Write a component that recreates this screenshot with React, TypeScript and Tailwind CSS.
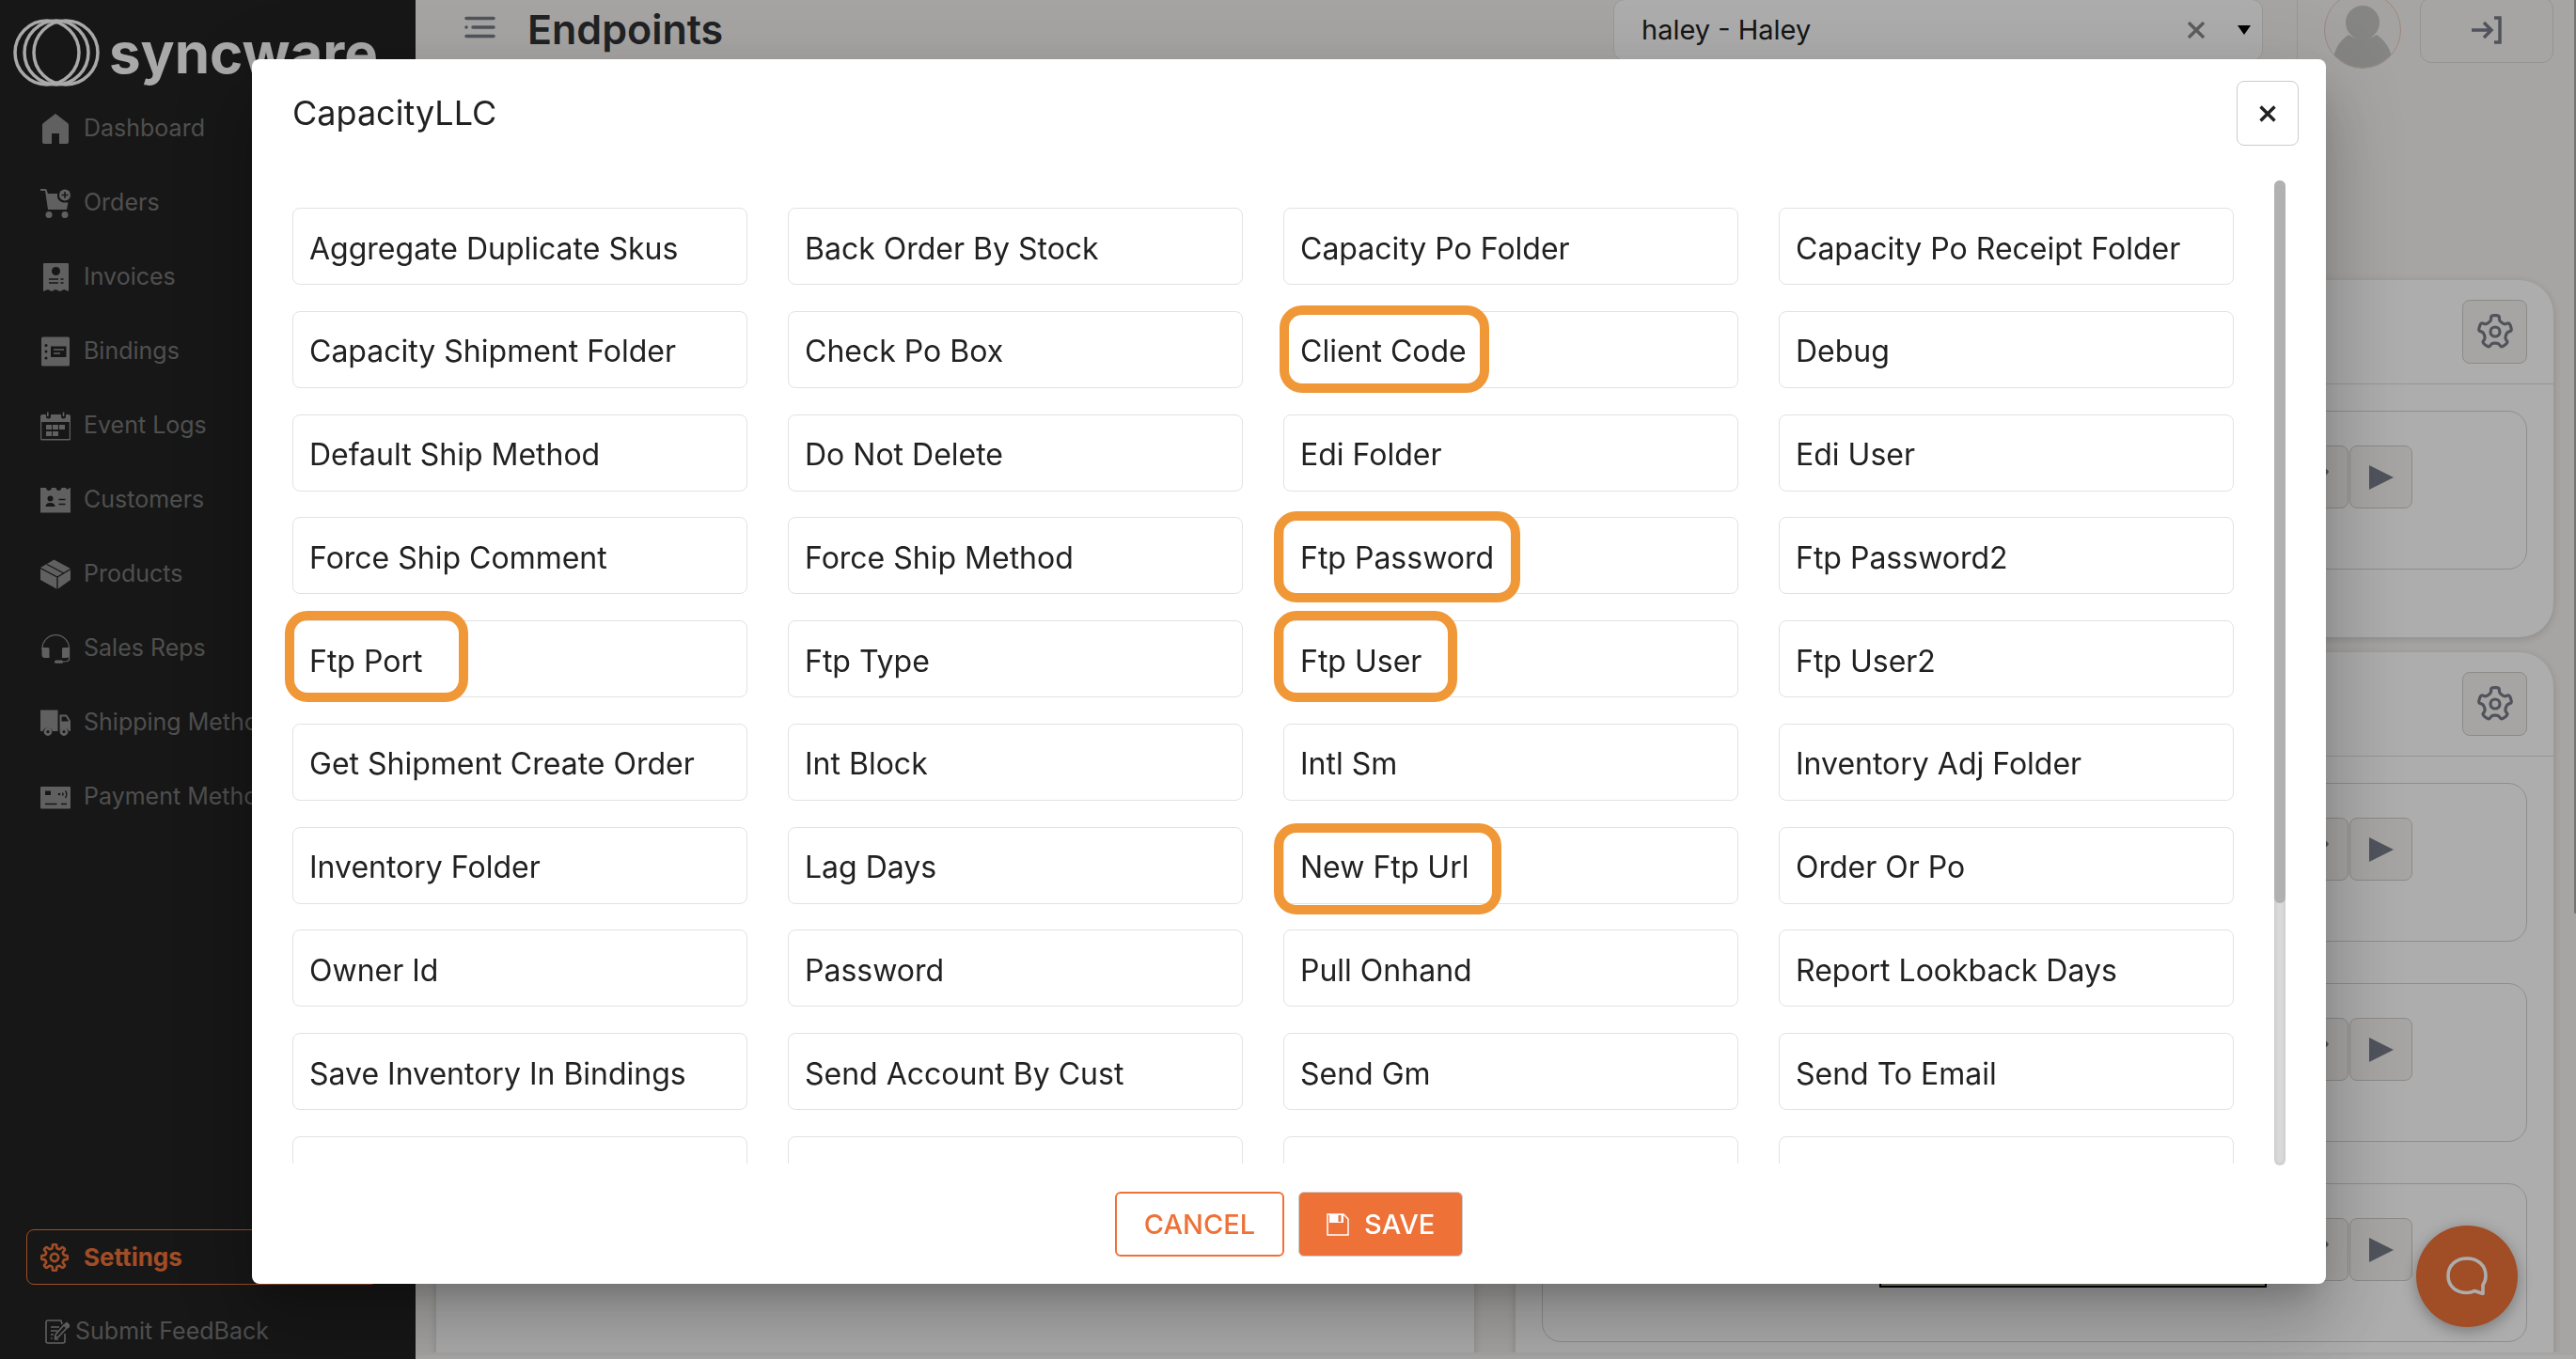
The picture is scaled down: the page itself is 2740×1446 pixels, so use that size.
import type { ReactNode } from "react";

/* Closed outline of a cog: flat rounded teeth joined by shallow valleys. */
function cogPath(teeth: number, outer: number, inner: number, tip: number, base: number) {
  const pts: [number, number][] = [];
  const step = (Math.PI * 2) / teeth;
  for (let i = 0; i < teeth; i++) {
    const mid = i * step - Math.PI / 2;
    const add = (r: number, a: number) => pts.push([20 + r * Math.cos(a), 20 + r * Math.sin(a)]);
    add(inner, mid - step * base);
    add(outer, mid - step * tip);
    add(outer, mid + step * tip);
    add(inner, mid + step * base);
  }
  const n = pts.length;
  const lerp = (a: [number, number], b: [number, number], t: number) =>
    `${(a[0] + (b[0] - a[0]) * t).toFixed(2)} ${(a[1] + (b[1] - a[1]) * t).toFixed(2)}`;
  let d = "";
  for (let i = 0; i < n; i++) {
    const prev = pts[(i + n - 1) % n];
    const cur = pts[i];
    const next = pts[(i + 1) % n];
    d += `${i === 0 ? "M" : "L"}${lerp(cur, prev, 0.38)}Q${cur[0].toFixed(2)} ${cur[1].toFixed(2)} ${lerp(cur, next, 0.38)}`;
  }
  return d + "Z";
}
const COG5 = cogPath(5, 18, 12.5, 0.2, 0.28);
const COG8 = cogPath(8, 19, 13.5, 0.19, 0.27);

function NavSvg({ children }: { children: ReactNode }) {
  return (
    <svg viewBox="0 0 32 32" className="h-8 w-8 shrink-0 fill-[#8e8e8e]" aria-hidden="true">
      {children}
    </svg>
  );
}

const nav: { label: string; icon: ReactNode }[] = [
  {
    label: "Dashboard",
    icon: <path d="M16 0 29 10q1 1 1 2v18q0 2-2 2h-8V21h-8v11H4q-2 0-2-2V12q0-1 1-2Z" />,
  },
  {
    label: "Orders",
    icon: (
      <>
        <path d="M0 1h5q2 0 2 2l1 3h10q-1 8 6 9.500h5.500L28 23H8L5 3H0Z" />
        <circle cx="26" cy="7.500" r="6" />
        <path d="M26 4v7M22.500 7.500h7" stroke="#222" strokeWidth="1.500" />
        <circle cx="9" cy="28.500" r="3.500" />
        <circle cx="26" cy="28.500" r="3.500" />
      </>
    ),
  },
  {
    label: "Invoices",
    icon: (
      <>
        <path d="M3 2q0-1 1-1h25q1 0 1 1v29l-5-2-4 2-5-2-4 2-4-2-5 2Z" />
        <circle cx="16.500" cy="9.500" r="4.500" fill="#222" />
        <path d="M9 18h10M21.500 18h3M9 22h10M21.500 22h3" stroke="#222" strokeWidth="1.400" />
      </>
    ),
  },
  {
    label: "Bindings",
    icon: (
      <>
        <rect x="1" y="0.500" width="30" height="31" rx="1.500" />
        <g fill="#222">
          <circle cx="6" cy="9.500" r="1.500" />
          <circle cx="6" cy="16" r="1.500" />
          <circle cx="6" cy="23" r="1.500" />
          <path d="M11 10.500h16.500V22H11Z" />
        </g>
        <path d="M14 14h11M14 18h7" stroke="#8e8e8e" strokeWidth="1.300" />
      </>
    ),
  },
  {
    label: "Event Logs",
    icon: (
      <>
        <path
          fillRule="evenodd"
          d="M2 4h4v2a2.500 2.500 0 0 0 5 0V4h11v2a2.500 2.500 0 0 0 5 0V4h3q2 0 2 2v24q0 1.500-1.500 1.500h-29Q0 31.500 0 30V6q0-2 2-2ZM1.200 12v18h29.600V12Z"
        />
        <path d="M7.800 1.500v4.500M24.500 1.500v4.500" stroke="#8e8e8e" strokeWidth="1.600" />
        <path d="M6 15h6v5H6ZM13 15h6v5h-6ZM20 15h6v5h-6ZM6 22h6v5H6ZM13 22h6v5h-6Z" />
      </>
    ),
  },
  {
    label: "Customers",
    icon: (
      <>
        <path d="M0 3h6q.5 3 3 3t3-3h4.500q.5 3 3 3t3-3H27q.5 2 2 1.500T31 3h1v26.500H0Z" />
        <circle cx="10.500" cy="14.500" r="3" fill="#222" />
        <path d="M5.500 23q0-4 5-4t5 4Z" fill="#222" />
        <path d="M19.500 15.500h7M19.500 20.500h7" stroke="#222" strokeWidth="1.400" />
      </>
    ),
  },
  {
    label: "Products",
    icon: (
      <>
        <path d="M14.500.500 32 10v12L18 32 0 22V9Z" />
        <path d="M0 9.500 18 19 32 10.500M18 19v13M7 5.500 25 15" stroke="#222" strokeWidth="1.400" fill="none" />
      </>
    ),
  },
  {
    label: "Sales Reps",
    icon: (
      <>
        <path d="M2 17v-1a14.300 14.300 0 0 1 28.600 0v11q0 3-5 3H22" fill="none" stroke="#8e8e8e" strokeWidth="1.200" />
        <path d="M1.500 15H8q1.500 0 1.500 1.500v9.500H5q-3.500 0-3.500-3ZM31 15h-6.500q-1.500 0-1.500 1.500v9.500h4.500q3.500 0 3.500-3Z" />
        <rect x="15" y="28.500" width="9" height="3.200" rx="1.500" />
      </>
    ),
  },
  {
    label: "Shipping Methods",
    icon: (
      <>
        <path d="M0 2.500h18.500v22.500H13a5.500 5.500 0 0 0-10.500 0H0ZM20.500 7.500H28l4 6.500v11h-1.500a5.500 5.500 0 0 0-10 0Z" />
        <path d="M22.500 9.500h4.500l3 5h-7.500Z" fill="#222" />
        <circle cx="8" cy="25.500" r="3" fill="none" stroke="#8e8e8e" strokeWidth="2.800" />
        <circle cx="25" cy="25.500" r="3" fill="none" stroke="#8e8e8e" strokeWidth="2.800" />
      </>
    ),
  },
  {
    label: "Payment Methods",
    icon: (
      <>
        <rect x="0" y="5" width="32" height="23.500" rx="1" />
        <path d="M5 9.500h6v4.500H5Z" fill="#222" />
        <path d="M5 23.500h12.500M22 23.500h6" stroke="#222" strokeWidth="1.300" />
        <circle cx="20" cy="13" r="1.300" fill="#222" />
        <path d="M23.500 11.500q1.200 1.500 0 3.200M26.500 9.500q2.600 3.500 0 7.500" stroke="#222" strokeWidth="1.400" fill="none" />
      </>
    ),
  },
];

const HL = "pointer-events-none absolute rounded-3xl border-10 border-[#f09837]";
const fields: { label: string; mark?: string }[] = [
  { label: "Aggregate Duplicate Skus" },
  { label: "Back Order By Stock" },
  { label: "Capacity Po Folder" },
  { label: "Capacity Po Receipt Folder" },
  { label: "Capacity Shipment Folder" },
  { label: "Check Po Box" },
  { label: "Client Code", mark: "-left-1 -top-1.5 h-[93px] w-[223px]" },
  { label: "Debug" },
  { label: "Default Ship Method" },
  { label: "Do Not Delete" },
  { label: "Edi Folder" },
  { label: "Edi User" },
  { label: "Force Ship Comment" },
  { label: "Force Ship Method" },
  { label: "Ftp Password", mark: "-left-2.5 -top-1.5 h-[97px] w-[262px]" },
  { label: "Ftp Password2" },
  { label: "Ftp Port", mark: "-left-2 -top-2.5 h-[97px] w-[195px]" },
  { label: "Ftp Type" },
  { label: "Ftp User", mark: "-left-2.5 -top-2.5 h-[97px] w-[195px]" },
  { label: "Ftp User2" },
  { label: "Get Shipment Create Order" },
  { label: "Int Block" },
  { label: "Intl Sm" },
  { label: "Inventory Adj Folder" },
  { label: "Inventory Folder" },
  { label: "Lag Days" },
  { label: "New Ftp Url", mark: "-left-2.5 -top-1 h-[97px] w-[242px]" },
  { label: "Order Or Po" },
  { label: "Owner Id" },
  { label: "Password" },
  { label: "Pull Onhand" },
  { label: "Report Lookback Days" },
  { label: "Save Inventory In Bindings" },
  { label: "Send Account By Cust" },
  { label: "Send Gm" },
  { label: "Send To Email" },
  { label: "Server" },
  { label: "Sftp Url" },
  { label: "Sub Method Id" },
  { label: "Sync" },
];

function Sidebar() {
  return (
    <aside className="flex w-[442px] shrink-0 flex-col overflow-hidden bg-[#222222]">
      <div className="flex h-[97px] items-center gap-2.5 pt-3.5 pl-3.5">
        <svg viewBox="0 0 92 74" className="h-[74px] w-[92px] shrink-0 fill-none stroke-[#fafafa] stroke-[3.5]" aria-hidden="true">
          <circle cx="36" cy="37" r="34" />
          <circle cx="46" cy="37" r="34" />
          <circle cx="56" cy="37" r="34" />
        </svg>
        <span className="text-[60px] leading-none font-bold text-[#fafafa]">syncware</span>
      </div>
      <nav className="flex flex-col" aria-label="Main">
        {nav.map((n) => (
          <a key={n.label} href="#" className="flex h-[79px] items-center gap-3.5 pl-[43px] text-[25px] whitespace-nowrap text-[#757575]">
            <NavSvg>{n.icon}</NavSvg>
            {n.label}
          </a>
        ))}
      </nav>
      <div className="mt-auto pr-10 pl-7">
        <a href="#" className="flex h-[59px] items-center gap-4 rounded-lg border border-[#ee7238] pl-3.5 text-[26px] font-bold text-[#ee7238]">
          <svg viewBox="0 0 40 40" className="h-[30px] w-[30px] fill-none stroke-current stroke-[3.6] [stroke-linejoin:round]" aria-hidden="true">
            <path d={COG8} />
            <circle cx="20" cy="20" r="5.500" />
          </svg>
          Settings
        </a>
        <a href="#" className="flex h-[79px] items-center gap-1.5 pt-5 pl-5 text-[25px] text-[#757575]">
          <svg viewBox="0 0 26 26" className="h-[26px] w-[26px] fill-none stroke-[#8e8e8e] stroke-[1.6]" aria-hidden="true">
            <path d="M17 1H3Q1 1 1 3v20q0 2 2 2h16q2 0 2-2v-8M17 1l1 4" />
            <path d="M10.500 19.500l1-4L20 6l3 3-9 9.500Z" />
            <path d="M21 6l2-1.500 2 2L23.500 8.500" strokeWidth="3" />
            <path d="M6 8h9M6 12h7M6 16h3M6 20h1.500M10 21h4" />
          </svg>
          Submit FeedBack
        </a>
      </div>
    </aside>
  );
}

function TopBar() {
  return (
    <header className="flex h-[63px] shrink-0 items-center pr-[22px] pl-[52px]">
      <button type="button" aria-label="Toggle menu" className="mr-[34px] mb-1.5">
        <svg viewBox="0 0 33 24" className="block h-6 w-[33px] fill-none stroke-[#767b87] stroke-[3.5] [stroke-linecap:round]" aria-hidden="true">
          <path d="M2 2.500h29M2 12h.1M9 12h22M2 21.500h29" />
        </svg>
      </button>
      <h1 className="text-[43px] leading-none font-semibold text-[#2f3236]">Endpoints</h1>
      <div className="ml-auto flex h-[66px] w-[691px] items-center rounded-xl border border-[#e2e2e2] bg-white pr-3 pl-[29px]">
        <span className="flex-1 text-[29px] leading-none text-[#212121]">haley - Haley</span>
        <button type="button" aria-label="Clear selection" className="mr-[35px]">
          <svg viewBox="0 0 18 18" className="block h-[18px] w-[18px] stroke-[#8a8a8a] stroke-[3.4]" aria-hidden="true">
            <path d="M1 1l16 16M17 1L1 17" />
          </svg>
        </button>
        <button type="button" aria-label="Open list">
          <svg viewBox="0 0 14 12" className="block h-3 w-3.5 fill-black" aria-hidden="true">
            <path d="M0 1h14L7 11Z" />
          </svg>
        </button>
      </div>
      <div className="ml-9 h-full w-px bg-[#e2ddd8]" />
      <div className="ml-7 h-[82px] w-[82px] shrink-0 overflow-hidden rounded-full border border-[#e6c8b8] bg-[#f3f1ee]">
        <svg viewBox="0 0 80 80" className="block h-full w-full fill-[#c4c4c2]" aria-hidden="true">
          <circle cx="40" cy="32" r="18" />
          <path d="M8 80q0-24 17-35 15 9 30 0 17 11 17 35Z" />
        </svg>
      </div>
      <button type="button" aria-label="Log out" className="ml-5 flex h-[70px] w-[142px] items-center justify-center rounded-xl border border-[#dcdad6]">
        <svg viewBox="0 0 34 30" className="h-[30px] w-[34px] fill-none stroke-[#767b87] stroke-[3.5]" aria-hidden="true">
          <path d="M1 15h20M14 7l8 8-8 8M25 2h6v26h-6" />
        </svg>
      </button>
    </header>
  );
}

function EndpointItem({ withInput }: { withInput?: boolean }) {
  return (
    <div className="mb-11 flex h-[169px] shrink-0 items-start justify-end rounded-[20px] border border-[#d2d2d2] pt-9 pr-[121px]">
      {withInput && (
        <input aria-label="Endpoint value" className="mr-5 h-[74px] w-[412px] border-2 border-black bg-[#cdc8aa]" />
      )}
      <button type="button" aria-label="Edit" className="flex h-[67px] w-[67px] items-center justify-center rounded-lg border border-[#cfcdc9] bg-[#f6f4f1]">
        <svg viewBox="0 0 26 26" className="h-[26px] w-[26px] fill-none stroke-[#767b87] stroke-[3.5] [stroke-linecap:round] [stroke-linejoin:round]" aria-hidden="true">
          <path d="M3 23l2-6L19 3l4 4L9 21Z" />
        </svg>
      </button>
      <button type="button" aria-label="Run" className="ml-px flex h-[67px] w-[67px] items-center justify-center rounded-lg border border-[#cfcdc9] bg-[#f6f4f1]">
        <svg viewBox="0 0 28 28" className="h-7 w-7 fill-[#767b87]" aria-hidden="true">
          <path d="M1 1l26 13L1 27Z" />
        </svg>
      </button>
    </div>
  );
}

function EndpointCard({ children }: { children: ReactNode }) {
  return (
    <section className="rounded-[36px] bg-white shadow-[0_2px_10px_rgba(0,0,0,0.16)]">
      <div className="flex h-[111px] items-center justify-end border-b border-[#dedede] px-7">
        <button type="button" aria-label="Endpoint settings" className="flex h-[68px] w-[69px] items-center justify-center rounded-lg border border-[#cfcdc9] bg-[#f6f4f1]">
          <svg viewBox="0 0 40 40" className="h-10 w-10 fill-none stroke-[#767b87] stroke-[3.2] [stroke-linejoin:round]" aria-hidden="true">
            <path d={COG5} />
            <circle cx="20" cy="20" r="5" />
          </svg>
        </button>
      </div>
      <div className="flex flex-col px-7 pt-7 pb-7">{children}</div>
    </section>
  );
}

function SettingsDialog() {
  return (
    <div className="fixed inset-0 flex bg-black/32 pt-[63px] pr-[266px] pb-20 pl-[268px]">
      <div
        role="dialog"
        aria-modal="true"
        aria-labelledby="dialog-title"
        className="flex min-w-0 flex-1 flex-col rounded-lg bg-white shadow-[0_22px_30px_-14px_rgba(0,0,0,0.2),0_48px_76px_6px_rgba(0,0,0,0.14),0_18px_92px_16px_rgba(0,0,0,0.12)]"
      >
        <div className="flex h-[129px] shrink-0 items-start justify-between pt-[23px] pr-[29px] pl-[43px]">
          <h2 id="dialog-title" className="text-4xl leading-[68px] text-[#212121]">
            CapacityLLC
          </h2>
          <button type="button" aria-label="Close" className="flex h-[69px] w-[66px] items-center justify-center rounded-lg border border-[#cccccc]">
            <svg viewBox="0 0 18 18" className="h-[18px] w-[18px] stroke-[#212121] stroke-[3.4]" aria-hidden="true">
              <path d="M1.500 1.500l15 15M16.500 1.500l-15 15" />
            </svg>
          </button>
        </div>

        <div className="flex min-h-0 flex-1 gap-[43px] px-[43px]">
          <div className="mb-0.5 -ml-4 flex-1 overflow-hidden pt-[29px] pl-4">
            <div className="grid h-[1070px] auto-rows-[82px] grid-cols-4 content-between gap-x-[43px]">
              {fields.map((f) => (
                <div key={f.label} className="relative">
                  <input
                    aria-label={f.label}
                    placeholder={f.label}
                    className="h-full w-full rounded-lg border border-[#e2e2e2] bg-white pt-1 pl-[17px] text-[32px] text-[#212121] placeholder:text-[#212121] placeholder:opacity-100"
                  />
                  {f.mark && <span className={`${HL} ${f.mark}`} />}
                </div>
              ))}
            </div>
          </div>
          <div className="w-3 shrink-0 rounded-full bg-[#dadada] shadow-[inset_0_0_5px_rgba(0,0,0,0.12)]">
            <div className="h-11/15 rounded-full bg-[#b1b1b1]" />
          </div>
        </div>

        <div className="flex shrink-0 justify-center gap-[15px] pt-7 pb-[29px]">
          <button type="button" className="h-[69px] rounded-md border-2 border-[#ee7238] px-[29px] text-[29px] font-medium text-[#ee7238]">
            CANCEL
          </button>
          <button type="button" className="flex h-[69px] items-center gap-4 rounded-md border border-[#cccccc] bg-[#ee7238] px-[29px] text-[29px] font-medium text-white">
            <svg viewBox="0 0 24 24" className="h-6 w-6 fill-none stroke-white stroke-[1.500]" aria-hidden="true">
              <path d="M1 1h17l5 5v17H1Z" />
              <path d="M3 1h15v9H3ZM12.500 2v7h3V2Z" fill="white" fillRule="evenodd" stroke="none" />
            </svg>
            SAVE
          </button>
        </div>
      </div>
    </div>
  );
}

export default function App() {
  return (
    <div className="flex h-screen overflow-hidden bg-[#f6f4f1] font-['Inter',sans-serif]">
      <Sidebar />
      <div className="flex min-w-0 flex-1 flex-col">
        <TopBar />
        <main className="mt-[218px] grid min-h-0 flex-1 grid-cols-2 gap-11 overflow-hidden px-[22px] pt-[17px]">
          <section className="h-full rounded-t-[36px] bg-white shadow-[0_2px_10px_rgba(0,0,0,0.16)]" />
          <div className="flex flex-col gap-4">
            <EndpointCard>
              <EndpointItem />
            </EndpointCard>
            <EndpointCard>
              <EndpointItem />
              <EndpointItem />
              <EndpointItem withInput />
            </EndpointCard>
          </div>
        </main>
        <footer className="mt-[3px] h-1 shrink-0 bg-[#fbfbfb]" />
      </div>
      <div className="w-0.5 shrink-0">
        <div className="h-[972px] rounded-b-full bg-[#aaaaaa]" />
      </div>
      <button
        type="button"
        aria-label="Open chat"
        className="fixed right-[62px] bottom-[34px] flex h-[108px] w-[108px] items-center justify-center rounded-full bg-[#ee7238] shadow-[0_4px_16px_rgba(0,0,0,0.3)]"
      >
        <svg viewBox="0 0 44 42" className="h-[42px] w-11 fill-none stroke-white stroke-[3.6] [stroke-linejoin:round]" aria-hidden="true">
          <path d="M22 2C33 2 42 9 42 20.500c0 4-1 7-3 9.500V39.500l-9-3Q26.500 38.500 22 38.500C11 38.500 2 32 2 20.500S11 2 22 2Z" />
        </svg>
      </button>
      <SettingsDialog />
    </div>
  );
}
